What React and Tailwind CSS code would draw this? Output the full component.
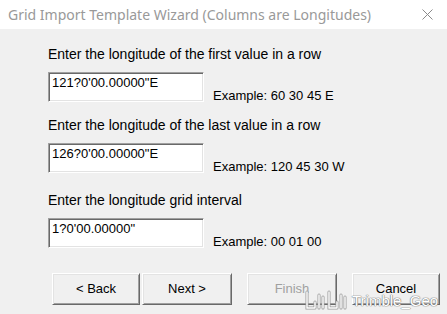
import React from 'react';

const sunken =
  'h-[30px] w-[156px] bg-white border border-t-[#a0a0a0] border-l-[#a0a0a0] border-r-white border-b-white shadow-[inset_1px_1px_0_#696969,inset_-1px_-1px_0_#e3e3e3] pl-[3px] pt-[2px] text-[13px] leading-[15px] text-black';

const raised =
  'h-[32px] w-[88px] flex items-center justify-center bg-[#f0f0f0] border border-t-white border-l-white border-r-[#696969] border-b-[#696969] shadow-[inset_1px_1px_0_#e3e3e3,inset_-1px_-1px_0_#a0a0a0] text-[13px]';

function Field({ label, value, example, mt }) {
  return (
    <div className={mt}>
      <div className="text-[14px] leading-[15px] text-black">{label}</div>
      <div className="mt-[10px] flex items-end">
        <div className={sunken}>{value}</div>
        <div className="ml-[9px] mb-[-1px] text-[13px] leading-[15px] text-black">{example}</div>
      </div>
    </div>
  );
}

function Watermark() {
  return (
    <div className="absolute left-[304px] top-[289px] flex items-end gap-[2px] pointer-events-none">
      <svg width="46" height="22" viewBox="0 0 46 22" fill="none">
        <g stroke="#9a9a9a" strokeWidth="3" strokeLinecap="round">
          <path d="M3 3v16h8M11 13v6M15 6v13M19 8v11M25 3v16h8M33 13v6M37 6v13M41 8v11" />
        </g>
        <g stroke="#ffffff" strokeWidth="1.4" strokeLinecap="round">
          <path d="M3 3v16h8M11 13v6M15 6v13M19 8v11M25 3v16h8M33 13v6M37 6v13M41 8v11" />
        </g>
      </svg>
      <span
        className="text-[15px] leading-[18px] text-white mb-[1px]"
        style={{ fontFamily: '"Liberation Sans", Arial, sans-serif', textShadow: '0 0 1px #7a7a7a, 0 0 1px #7a7a7a, 0 0 1px #7a7a7a' }}
      >
        Trimble_Geo
      </span>
    </div>
  );
}

export default function App() {
  return (
    <div
      className="relative w-[447px] h-[314px] flex flex-col overflow-hidden bg-[#f0f0f0]"
      style={{ fontFamily: '"Liberation Sans", Arial, sans-serif' }}
    >
      <div className="h-[29px] bg-white flex items-center justify-between pl-[8px] pr-[14px]">
        <span
          className="text-[14px] text-[#999999]"
          style={{ fontFamily: '"Noto Sans", "Open Sans", sans-serif' }}
        >
          Grid Import Template Wizard (Columns are Longitudes)
        </span>
        <svg width="11" height="11" viewBox="0 0 11 11" stroke="#8a8a8a" strokeWidth="1">
          <path d="M0.5 0.5l10 10M10.5 0.5l-10 10" />
        </svg>
      </div>

      <div className="flex-1 pl-[48px] pt-[18px]">
        <Field
          label="Enter the longitude of the first value in a row"
          value={'121?0\'00.00000"E'}
          example="Example: 60 30 45 E"
        />
        <Field
          mt="mt-[16px]"
          label="Enter the longitude of the last value in a row"
          value={'126?0\'00.00000"E'}
          example="Example: 120 45 30 W"
        />
        <Field
          mt="mt-[20px]"
          label="Enter the longitude grid interval"
          value={'1?0\'00.00000"'}
          example="Example: 00 01 00"
        />

        <div className="mt-[25px] ml-[4px] flex">
          <div className={raised + ' text-black'}>&lt; Back</div>
          <div className={raised + ' ml-[2px] w-[90px] text-black'}>Next &gt;</div>
          <div className={raised + ' ml-[15px] w-[90px] text-[#a0a0a0]'}>Finish</div>
          <div className={raised + ' ml-[15px] text-black'}>Cancel</div>
        </div>
      </div>

      <Watermark />
    </div>
  );
}
